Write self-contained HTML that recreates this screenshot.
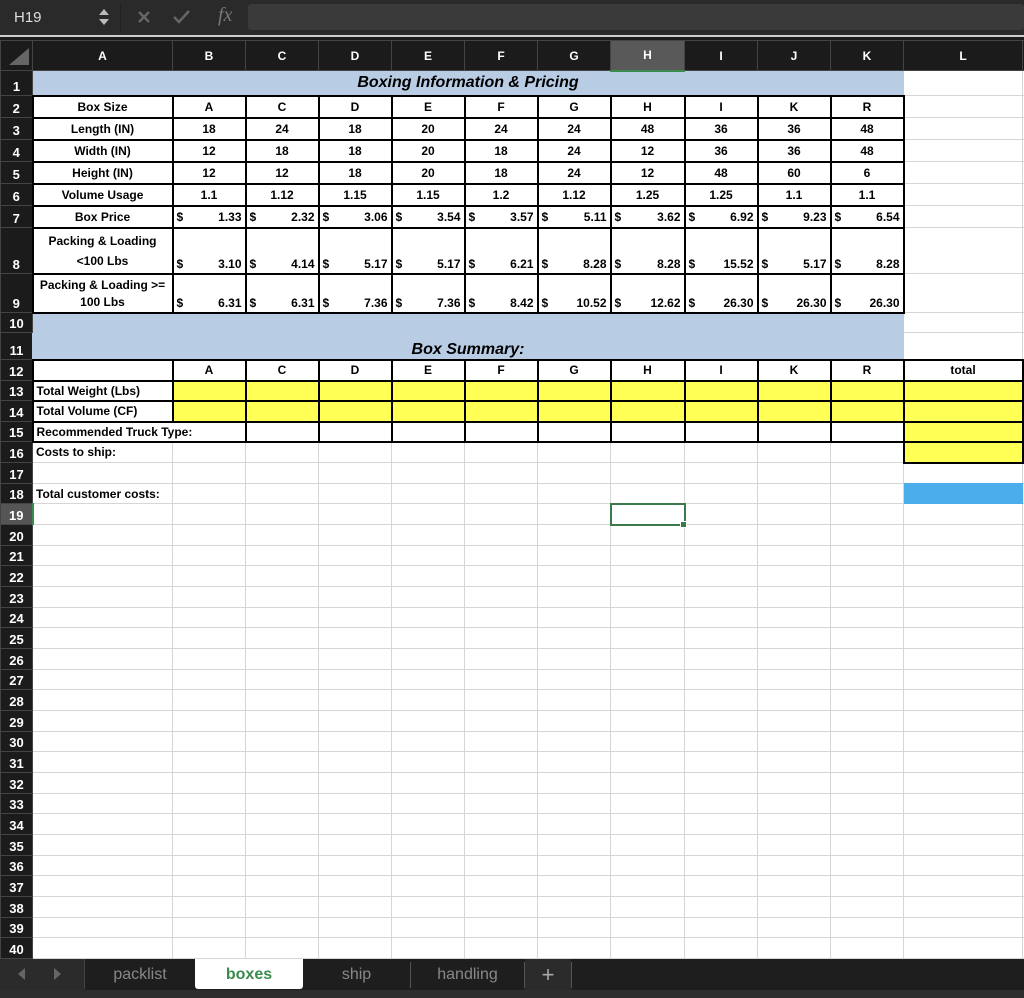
<!DOCTYPE html>
<html><head><meta charset="utf-8"><style>
*{margin:0;padding:0;box-sizing:border-box}
body{width:1024px;height:998px;background:#1c1c1c;position:relative;overflow:hidden;font-family:"Liberation Sans",sans-serif}
#fb{position:absolute;left:0;top:0;width:1024px;height:35px;background:#2a2a2a}
#nb{position:absolute;left:0;top:3px;width:115px;height:29px;background:#2a2a2a;color:#ddd;font-size:15px;line-height:29px;padding-left:14px}
#fx{position:absolute;left:248px;top:4px;width:776px;height:26px;background:#3a3a3a;border-radius:3px}
#sep{position:absolute;left:0;top:35px;width:1024px;height:2px;background:#cfcfcf}
table{position:absolute;left:0;top:40px;width:1024px;border-collapse:collapse;table-layout:fixed;background:#fff}
td{border:1px solid #d6d6d6;font-weight:bold;font-size:12px;color:#000;text-align:center;overflow:visible;white-space:nowrap;padding:0 3px;line-height:14px}
tr.h td{background:#1b1b1b;color:#fff;border:1px solid #444;font-weight:bold;font-size:12px}
td.rh{background:#1b1b1b;color:#fff;border:1px solid #444;border-top:1px solid #555;font-size:13px;text-align:center;padding:0 0 1px 0;vertical-align:bottom}
td.bl{background:#b8cce4;border-color:#b8cce4}
td.k{border:2px solid #000}
td.y{background:#ffff55}
td.c{text-align:left}
td.b{vertical-align:bottom;padding-bottom:2px}
.m{display:flex;justify-content:space-between}
</style></head><body>
<div id="fb"></div>
<div id="nb">H19</div>
<svg style="position:absolute;left:98px;top:6px" width="12" height="22"><path d="M1 9 L6 3 L11 9Z M1 13 L6 19 L11 13Z" fill="#bbb"/></svg>
<div style="position:absolute;left:120px;top:4px;width:1px;height:28px;background:#222"></div>
<svg style="position:absolute;left:136px;top:9px" width="80" height="16"><path d="M3 3 L13 13 M13 3 L3 13" stroke="#666" stroke-width="2.5"/><path d="M38 8 L43 13 L53 2" stroke="#666" stroke-width="2.5" fill="none"/></svg>
<div style="position:absolute;left:218px;top:4px;color:#777;font-family:'Liberation Serif',serif;font-style:italic;font-size:20px">fx</div>
<div id="fx"></div>
<div id="sep"></div>
<table>
<colgroup><col style="width:32px"><col style="width:140px"><col style="width:73px"><col style="width:73px"><col style="width:73px"><col style="width:73px"><col style="width:73px"><col style="width:73px"><col style="width:74px"><col style="width:73px"><col style="width:73px"><col style="width:73px"><col style="width:119px"><col style="width:2px"></colgroup>
<tr class="h" style="height:30px"><td style="background:#1b1b1b;padding:0"><svg width="28" height="20" style="display:block;margin-left:3px"><path d="M25 2 L25 19 L5 19Z" fill="#666"/></svg></td><td>A</td><td>B</td><td>C</td><td>D</td><td>E</td><td>F</td><td>G</td><td style="background:#595959;border-bottom:2px solid #3b8a4e">H</td><td>I</td><td>J</td><td>K</td><td>L</td><td></td></tr>
<tr style="height:25px"><td class="rh">1</td><td class="bl" colspan="11" style="font-style:italic;font-size:16px;border-bottom:2px solid #000">Boxing Information &amp; Pricing</td><td></td><td></td></tr>
<tr style="height:22px"><td class="rh">2</td><td class="k">Box Size</td><td class="k">A</td><td class="k">C</td><td class="k">D</td><td class="k">E</td><td class="k">F</td><td class="k">G</td><td class="k">H</td><td class="k">I</td><td class="k">K</td><td class="k">R</td><td></td><td></td></tr>
<tr style="height:22px"><td class="rh">3</td><td class="k">Length (IN)</td><td class="k">18</td><td class="k">24</td><td class="k">18</td><td class="k">20</td><td class="k">24</td><td class="k">24</td><td class="k">48</td><td class="k">36</td><td class="k">36</td><td class="k">48</td><td></td><td></td></tr>
<tr style="height:22px"><td class="rh">4</td><td class="k">Width (IN)</td><td class="k">12</td><td class="k">18</td><td class="k">18</td><td class="k">20</td><td class="k">18</td><td class="k">24</td><td class="k">12</td><td class="k">36</td><td class="k">36</td><td class="k">48</td><td></td><td></td></tr>
<tr style="height:22px"><td class="rh">5</td><td class="k">Height (IN)</td><td class="k">12</td><td class="k">12</td><td class="k">18</td><td class="k">20</td><td class="k">18</td><td class="k">24</td><td class="k">12</td><td class="k">48</td><td class="k">60</td><td class="k">6</td><td></td><td></td></tr>
<tr style="height:22px"><td class="rh">6</td><td class="k">Volume Usage</td><td class="k">1.1</td><td class="k">1.12</td><td class="k">1.15</td><td class="k">1.15</td><td class="k">1.2</td><td class="k">1.12</td><td class="k">1.25</td><td class="k">1.25</td><td class="k">1.1</td><td class="k">1.1</td><td></td><td></td></tr>
<tr style="height:22px"><td class="rh">7</td><td class="k">Box Price</td><td class="k"><div class="m"><span>$</span><span>1.33</span></div></td><td class="k"><div class="m"><span>$</span><span>2.32</span></div></td><td class="k"><div class="m"><span>$</span><span>3.06</span></div></td><td class="k"><div class="m"><span>$</span><span>3.54</span></div></td><td class="k"><div class="m"><span>$</span><span>3.57</span></div></td><td class="k"><div class="m"><span>$</span><span>5.11</span></div></td><td class="k"><div class="m"><span>$</span><span>3.62</span></div></td><td class="k"><div class="m"><span>$</span><span>6.92</span></div></td><td class="k"><div class="m"><span>$</span><span>9.23</span></div></td><td class="k"><div class="m"><span>$</span><span>6.54</span></div></td><td></td><td></td></tr>
<tr style="height:46px"><td class="rh">8</td><td class="k b" style="line-height:20px">Packing &amp; Loading<br>&lt;100 Lbs</td><td class="k b"><div class="m"><span>$</span><span>3.10</span></div></td><td class="k b"><div class="m"><span>$</span><span>4.14</span></div></td><td class="k b"><div class="m"><span>$</span><span>5.17</span></div></td><td class="k b"><div class="m"><span>$</span><span>5.17</span></div></td><td class="k b"><div class="m"><span>$</span><span>6.21</span></div></td><td class="k b"><div class="m"><span>$</span><span>8.28</span></div></td><td class="k b"><div class="m"><span>$</span><span>8.28</span></div></td><td class="k b"><div class="m"><span>$</span><span>15.52</span></div></td><td class="k b"><div class="m"><span>$</span><span>5.17</span></div></td><td class="k b"><div class="m"><span>$</span><span>8.28</span></div></td><td></td><td></td></tr>
<tr style="height:39px"><td class="rh">9</td><td class="k b" style="line-height:17px;padding-bottom:1px">Packing &amp; Loading &gt;=<br>100 Lbs</td><td class="k b"><div class="m"><span>$</span><span>6.31</span></div></td><td class="k b"><div class="m"><span>$</span><span>6.31</span></div></td><td class="k b"><div class="m"><span>$</span><span>7.36</span></div></td><td class="k b"><div class="m"><span>$</span><span>7.36</span></div></td><td class="k b"><div class="m"><span>$</span><span>8.42</span></div></td><td class="k b"><div class="m"><span>$</span><span>10.52</span></div></td><td class="k b"><div class="m"><span>$</span><span>12.62</span></div></td><td class="k b"><div class="m"><span>$</span><span>26.30</span></div></td><td class="k b"><div class="m"><span>$</span><span>26.30</span></div></td><td class="k b"><div class="m"><span>$</span><span>26.30</span></div></td><td></td><td></td></tr>
<tr style="height:20px"><td class="rh">10</td><td class="bl" colspan="11" rowspan="2" style="font-style:italic;font-size:16px;vertical-align:bottom;padding-bottom:2px">Box Summary:</td><td></td><td></td></tr>
<tr style="height:27px"><td class="rh">11</td><td></td><td></td></tr>
<tr style="height:21px"><td class="rh">12</td><td class="k"></td><td class="k">A</td><td class="k">C</td><td class="k">D</td><td class="k">E</td><td class="k">F</td><td class="k">G</td><td class="k">H</td><td class="k">I</td><td class="k">K</td><td class="k">R</td><td class="k">total</td><td></td></tr>
<tr style="height:20px"><td class="rh">13</td><td class="k c">Total Weight (Lbs)</td><td class="k y"></td><td class="k y"></td><td class="k y"></td><td class="k y"></td><td class="k y"></td><td class="k y"></td><td class="k y"></td><td class="k y"></td><td class="k y"></td><td class="k y"></td><td class="k y"></td><td></td></tr>
<tr style="height:21px"><td class="rh">14</td><td class="k c">Total Volume (CF)</td><td class="k y"></td><td class="k y"></td><td class="k y"></td><td class="k y"></td><td class="k y"></td><td class="k y"></td><td class="k y"></td><td class="k y"></td><td class="k y"></td><td class="k y"></td><td class="k y"></td><td></td></tr>
<tr style="height:20px"><td class="rh">15</td><td class="c" style="border-bottom:2px solid #000;border-left:2px solid #000">Recommended Truck Type:</td><td class="k" style="border-left-color:#fff"></td><td class="k"></td><td class="k"></td><td class="k"></td><td class="k"></td><td class="k"></td><td class="k"></td><td class="k"></td><td class="k"></td><td class="k"></td><td class="k y"></td><td></td></tr>
<tr style="height:21px"><td class="rh">16</td><td class="c">Costs to ship:</td><td></td><td></td><td></td><td></td><td></td><td></td><td></td><td></td><td></td><td></td><td class="k y"></td><td></td></tr>
<tr style="height:21px"><td class="rh">17</td><td></td><td></td><td></td><td></td><td></td><td></td><td></td><td></td><td></td><td></td><td></td><td style="border-bottom-color:#4baeea"></td><td></td></tr>
<tr style="height:20px"><td class="rh">18</td><td class="c">Total customer costs:</td><td></td><td></td><td></td><td></td><td></td><td></td><td></td><td></td><td></td><td></td><td style="background:#4baeea;border-color:#4baeea"></td><td></td></tr>
<tr style="height:21px"><td class="rh" style="background:#555;border-right:2px solid #3b8a4e">19</td><td></td><td></td><td></td><td></td><td></td><td></td><td></td><td style="border:2px solid #3b7a4a"></td><td></td><td></td><td></td><td></td><td></td></tr>
<tr style="height:21px"><td class="rh">20</td><td></td><td></td><td></td><td></td><td></td><td></td><td></td><td></td><td></td><td></td><td></td><td></td><td></td></tr>
<tr style="height:20px"><td class="rh">21</td><td></td><td></td><td></td><td></td><td></td><td></td><td></td><td></td><td></td><td></td><td></td><td></td><td></td></tr>
<tr style="height:21px"><td class="rh">22</td><td></td><td></td><td></td><td></td><td></td><td></td><td></td><td></td><td></td><td></td><td></td><td></td><td></td></tr>
<tr style="height:21px"><td class="rh">23</td><td></td><td></td><td></td><td></td><td></td><td></td><td></td><td></td><td></td><td></td><td></td><td></td><td></td></tr>
<tr style="height:20px"><td class="rh">24</td><td></td><td></td><td></td><td></td><td></td><td></td><td></td><td></td><td></td><td></td><td></td><td></td><td></td></tr>
<tr style="height:21px"><td class="rh">25</td><td></td><td></td><td></td><td></td><td></td><td></td><td></td><td></td><td></td><td></td><td></td><td></td><td></td></tr>
<tr style="height:21px"><td class="rh">26</td><td></td><td></td><td></td><td></td><td></td><td></td><td></td><td></td><td></td><td></td><td></td><td></td><td></td></tr>
<tr style="height:20px"><td class="rh">27</td><td></td><td></td><td></td><td></td><td></td><td></td><td></td><td></td><td></td><td></td><td></td><td></td><td></td></tr>
<tr style="height:21px"><td class="rh">28</td><td></td><td></td><td></td><td></td><td></td><td></td><td></td><td></td><td></td><td></td><td></td><td></td><td></td></tr>
<tr style="height:21px"><td class="rh">29</td><td></td><td></td><td></td><td></td><td></td><td></td><td></td><td></td><td></td><td></td><td></td><td></td><td></td></tr>
<tr style="height:20px"><td class="rh">30</td><td></td><td></td><td></td><td></td><td></td><td></td><td></td><td></td><td></td><td></td><td></td><td></td><td></td></tr>
<tr style="height:21px"><td class="rh">31</td><td></td><td></td><td></td><td></td><td></td><td></td><td></td><td></td><td></td><td></td><td></td><td></td><td></td></tr>
<tr style="height:21px"><td class="rh">32</td><td></td><td></td><td></td><td></td><td></td><td></td><td></td><td></td><td></td><td></td><td></td><td></td><td></td></tr>
<tr style="height:20px"><td class="rh">33</td><td></td><td></td><td></td><td></td><td></td><td></td><td></td><td></td><td></td><td></td><td></td><td></td><td></td></tr>
<tr style="height:21px"><td class="rh">34</td><td></td><td></td><td></td><td></td><td></td><td></td><td></td><td></td><td></td><td></td><td></td><td></td><td></td></tr>
<tr style="height:21px"><td class="rh">35</td><td></td><td></td><td></td><td></td><td></td><td></td><td></td><td></td><td></td><td></td><td></td><td></td><td></td></tr>
<tr style="height:20px"><td class="rh">36</td><td></td><td></td><td></td><td></td><td></td><td></td><td></td><td></td><td></td><td></td><td></td><td></td><td></td></tr>
<tr style="height:21px"><td class="rh">37</td><td></td><td></td><td></td><td></td><td></td><td></td><td></td><td></td><td></td><td></td><td></td><td></td><td></td></tr>
<tr style="height:21px"><td class="rh">38</td><td></td><td></td><td></td><td></td><td></td><td></td><td></td><td></td><td></td><td></td><td></td><td></td><td></td></tr>
<tr style="height:20px"><td class="rh">39</td><td></td><td></td><td></td><td></td><td></td><td></td><td></td><td></td><td></td><td></td><td></td><td></td><td></td></tr>
<tr style="height:21px"><td class="rh">40</td><td></td><td></td><td></td><td></td><td></td><td></td><td></td><td></td><td></td><td></td><td></td><td></td><td></td></tr>
</table>
<div style="position:absolute;left:680px;top:521px;width:7px;height:7px;background:#3b7a4a;border:1px solid #fff"></div>
<div style="position:absolute;left:0;top:959px;width:1024px;height:39px;background:#1e1e1e"></div>
<div style="position:absolute;left:0;top:959px;width:84px;height:31px;background:#2b2b2b"></div>
<svg style="position:absolute;left:16px;top:966px" width="45" height="16"><path d="M9 2 L2 8 L9 14Z M38 2 L45 8 L38 14Z" fill="#666"/></svg>
<div style="position:absolute;left:84px;top:959px;width:1px;height:30px;background:#444"></div>
<div style="position:absolute;left:85px;top:959px;width:110px;height:31px;color:#888;font-size:16px;text-align:center;line-height:31px">packlist</div>
<div style="position:absolute;left:195px;top:959px;width:108px;height:30px;background:#fff;border-radius:0 0 3px 3px;color:#3b8a4e;font-size:16px;font-weight:bold;text-align:center;line-height:31px">boxes</div>
<div style="position:absolute;left:303px;top:959px;width:107px;height:31px;color:#888;font-size:16px;text-align:center;line-height:31px">ship</div>
<div style="position:absolute;left:410px;top:962px;width:1px;height:26px;background:#555"></div>
<div style="position:absolute;left:411px;top:959px;width:113px;height:31px;color:#888;font-size:16px;text-align:center;line-height:31px">handling</div>
<div style="position:absolute;left:524px;top:962px;width:1px;height:26px;background:#555"></div>
<div style="position:absolute;left:525px;top:959px;width:46px;height:31px;background:#2b2b2b;color:#aaa;font-size:22px;text-align:center;line-height:31px">+</div>
<div style="position:absolute;left:571px;top:962px;width:1px;height:26px;background:#555"></div>
<div style="position:absolute;left:0;top:990px;width:1024px;height:8px;background:#2e2e2e"></div>
</body></html>
